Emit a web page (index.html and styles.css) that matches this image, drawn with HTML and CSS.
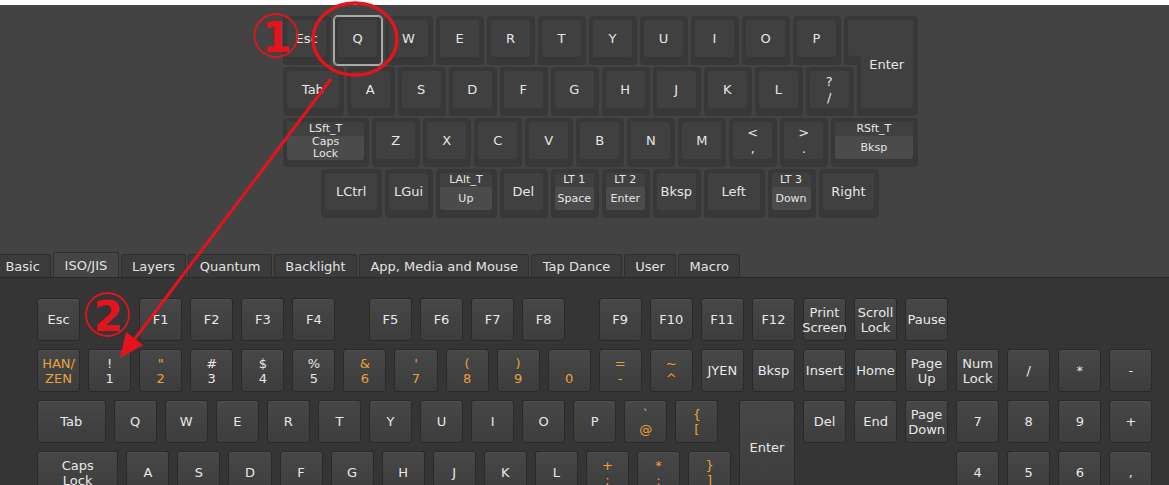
FILE: index.html
```html
<!DOCTYPE html>
<html>
<head>
<meta charset="utf-8">
<link rel="stylesheet" href="styles.css">
</head>
<body>
<div class="strip"></div>
<div class="top">
  <div class="kb">
    <div class="k w1 c1"><div class="cap">Esc</div></div>
    <div class="k w1 hl"><div class="cap">Q</div></div>
    <div class="k w1"><div class="cap">W</div></div>
    <div class="k w1"><div class="cap">E</div></div>
    <div class="k w1"><div class="cap">R</div></div>
    <div class="k w1"><div class="cap">T</div></div>
    <div class="k w1"><div class="cap">Y</div></div>
    <div class="k w1"><div class="cap">U</div></div>
    <div class="k w1"><div class="cap">I</div></div>
    <div class="k w1"><div class="cap">O</div></div>
    <div class="k w1"><div class="cap">P</div></div>
    <div class="k enter"><div class="cap">Enter</div></div>

    <div class="k w125 c1"><div class="cap">Tab</div></div>
    <div class="k w1"><div class="cap">A</div></div>
    <div class="k w1"><div class="cap">S</div></div>
    <div class="k w1"><div class="cap">D</div></div>
    <div class="k w1"><div class="cap">F</div></div>
    <div class="k w1"><div class="cap">G</div></div>
    <div class="k w1"><div class="cap">H</div></div>
    <div class="k w1"><div class="cap">J</div></div>
    <div class="k w1"><div class="cap">K</div></div>
    <div class="k w1"><div class="cap">L</div></div>
    <div class="k w1"><div class="cap two">?<br>/</div></div>

    <div class="k w175 c1 mt"><div class="cap"><span class="lbl">LSft_T</span><span class="box">Caps<br>Lock</span></div></div>
    <div class="k w1"><div class="cap">Z</div></div>
    <div class="k w1"><div class="cap">X</div></div>
    <div class="k w1"><div class="cap">C</div></div>
    <div class="k w1"><div class="cap">V</div></div>
    <div class="k w1"><div class="cap">B</div></div>
    <div class="k w1"><div class="cap">N</div></div>
    <div class="k w1"><div class="cap">M</div></div>
    <div class="k w1"><div class="cap two">&lt;<br>,</div></div>
    <div class="k w1"><div class="cap two">&gt;<br>.</div></div>
    <div class="k w175 mt"><div class="cap"><span class="lbl">RSft_T</span><span class="box">Bksp</span></div></div>

    <div class="k w125 c4"><div class="cap">LCtrl</div></div>
    <div class="k w1"><div class="cap">LGui</div></div>
    <div class="k w125 mt"><div class="cap"><span class="lbl">LAlt_T</span><span class="box">Up</span></div></div>
    <div class="k w1"><div class="cap">Del</div></div>
    <div class="k w1 mt"><div class="cap"><span class="lbl">LT 1</span><span class="box">Space</span></div></div>
    <div class="k w1 mt"><div class="cap"><span class="lbl">LT 2</span><span class="box">Enter</span></div></div>
    <div class="k w1"><div class="cap">Bksp</div></div>
    <div class="k w125"><div class="cap">Left</div></div>
    <div class="k w1 mt"><div class="cap"><span class="lbl">LT 3</span><span class="box">Down</span></div></div>
    <div class="k w125"><div class="cap">Right</div></div>
  </div>
</div>

<div class="tabs">
  <div class="tab first">Basic</div>
  <div class="tab sel">ISO/JIS</div>
  <div class="tab">Layers</div>
  <div class="tab">Quantum</div>
  <div class="tab">Backlight</div>
  <div class="tab">App, Media and Mouse</div>
  <div class="tab">Tap Dance</div>
  <div class="tab">User</div>
  <div class="tab">Macro</div>
</div>

<div class="pane">
  <div class="kb2">
    <div class="b c1">Esc</div>
    <div class="b cF1">F1</div>
    <div class="b">F2</div>
    <div class="b">F3</div>
    <div class="b">F4</div>
    <div class="b cF5">F5</div>
    <div class="b">F6</div>
    <div class="b">F7</div>
    <div class="b">F8</div>
    <div class="b cF9">F9</div>
    <div class="b">F10</div>
    <div class="b">F11</div>
    <div class="b">F12</div>
    <div class="b">Print<br>Screen</div>
    <div class="b">Scroll<br>Lock</div>
    <div class="b">Pause</div>

    <div class="b c1 o">HAN/<br>ZEN</div>
    <div class="b">!<br>1</div>
    <div class="b o">"<br>2</div>
    <div class="b">#<br>3</div>
    <div class="b">$<br>4</div>
    <div class="b">%<br>5</div>
    <div class="b o">&amp;<br>6</div>
    <div class="b o">'<br>7</div>
    <div class="b o">(<br>8</div>
    <div class="b o">)<br>9</div>
    <div class="b o lo">0</div>
    <div class="b o">=<br>-</div>
    <div class="b o">~<br>^</div>
    <div class="b">JYEN</div>
    <div class="b">Bksp</div>
    <div class="b">Insert</div>
    <div class="b">Home</div>
    <div class="b">Page<br>Up</div>
    <div class="b">Num<br>Lock</div>
    <div class="b">/</div>
    <div class="b">*</div>
    <div class="b">-</div>

    <div class="b c1 w15">Tab</div>
    <div class="b">Q</div>
    <div class="b">W</div>
    <div class="b">E</div>
    <div class="b">R</div>
    <div class="b">T</div>
    <div class="b">Y</div>
    <div class="b">U</div>
    <div class="b">I</div>
    <div class="b">O</div>
    <div class="b">P</div>
    <div class="b o">`<br>@</div>
    <div class="b o">{<br>[</div>
    <div class="b ent">Enter</div>
    <div class="b cDel">Del</div>
    <div class="b">End</div>
    <div class="b">Page<br>Down</div>
    <div class="b">7</div>
    <div class="b">8</div>
    <div class="b">9</div>
    <div class="b">+</div>

    <div class="b c1 w175">Caps<br>Lock</div>
    <div class="b">A</div>
    <div class="b">S</div>
    <div class="b">D</div>
    <div class="b">F</div>
    <div class="b">G</div>
    <div class="b">H</div>
    <div class="b">J</div>
    <div class="b">K</div>
    <div class="b">L</div>
    <div class="b o">+<br>;</div>
    <div class="b o">*<br>:</div>
    <div class="b o">}<br>]</div>
    <div class="b cNum">4</div>
    <div class="b">5</div>
    <div class="b">6</div>
    <div class="b">,</div>
  </div>
</div>

<svg class="overlay" width="1169" height="485" viewBox="0 0 1169 485">
  <ellipse cx="355" cy="39" rx="42" ry="36" fill="none" stroke="#e3141c" stroke-width="3.5"/>
  <circle cx="276" cy="35.5" r="21.5" fill="none" stroke="#e3141c" stroke-width="1.8"/>
  <text x="276.5" y="51.5" class="num">1</text>
  <circle cx="107.5" cy="314.5" r="21.5" fill="none" stroke="#e3141c" stroke-width="1.8"/>
  <text x="108" y="330.5" class="num">2</text>
  <line x1="331" y1="79" x2="134" y2="340" stroke="#e3141c" stroke-width="3"/>
  <polygon points="120,358 126,332 143,345" fill="#e3141c"/>
</svg>
</body>
</html>
```

FILE: styles.css
```css
html, body {
  margin: 0;
  padding: 0;
}
body {
  width: 1169px;
  height: 485px;
  overflow: hidden;
  position: relative;
  background: #353535;
  font-family: "DejaVu Sans", "Liberation Sans", sans-serif;
  color: #e6e6e6;
}
.strip {
  height: 5px;
  background: #ffffff;
}
.top {
  height: 247px;
  box-sizing: border-box;
  padding: 11px 0 0 283px;
  background: #434343;
}
.kb {
  display: grid;
  grid-template-columns: repeat(50, 12.75px);
  grid-auto-rows: 51px;
}
.k {
  margin: 0 3px 2px 0;
  background: #383838;
  border-radius: 4px;
  padding: 4px 5px 8px 4px;
  box-sizing: border-box;
  display: flex;
}
.cap {
  flex: 1;
  background: #404040;
  border-radius: 3px;
  display: flex;
  align-items: center;
  justify-content: center;
  text-align: center;
  font-size: 13px;
  line-height: 15px;
  white-space: nowrap;
  position: relative;
}
.cap.two {
  line-height: 16px;
}
.w1 { grid-column-end: span 4; }
.w125 { grid-column-end: span 5; }
.w175 { grid-column-end: span 7; }
.c1 { grid-column-start: 1; }
.c4 { grid-column-start: 4; }
.hl {
  box-shadow: 0 0 0 1px #a8a8a8, inset 0 0 0 1px #a8a8a8;
}
.k.enter {
  grid-column: 46 / span 5;
  grid-row: 1 / span 2;
  position: relative;
}
.k.enter::before {
  content: "";
  position: absolute;
  left: -12.75px;
  top: 0;
  width: 20px;
  height: 49px;
  background: #383838;
  border-radius: 4px 0 0 4px;
}
.k.enter .cap::before {
  content: "";
  position: absolute;
  left: -13px;
  top: 0;
  width: 16px;
  height: 36px;
  background: #404040;
  border-radius: 3px 0 0 3px;
}
.mt .cap {
  flex-direction: column;
  align-items: stretch;
  justify-content: flex-start;
}
.lbl {
  font-size: 11px;
  line-height: 14px;
  height: 14px;
}
.box {
  flex: 1;
  background: #4b4b4b;
  border-radius: 3px;
  font-size: 11px;
  line-height: 12px;
  display: flex;
  align-items: center;
  justify-content: center;
}
.tabs {
  height: 25px;
  background: #434343;
  border-bottom: 1px solid #2a2a2a;
  display: flex;
  align-items: flex-end;
  gap: 2px;
}
.tab {
  height: 23px;
  box-sizing: border-box;
  padding: 0 10.4px;
  border: 1px solid #2f2f2f;
  border-bottom: none;
  border-radius: 3px 3px 0 0;
  background: #3b3b3b;
  font-size: 13px;
  display: flex;
  align-items: center;
  white-space: nowrap;
  color: #e2e2e2;
}
.tab.first {
  margin-left: -6px;
}
.tab.sel {
  height: 25px;
  background: #454545;
}
.pane {
  padding: 20px 0 0 37px;
  background: #353535;
}
.kb2 {
  display: grid;
  grid-template-columns: repeat(88, 12.775px);
  grid-auto-rows: 51px;
}
.b {
  grid-column-end: span 4;
  margin: 0 8px 8px 0;
  box-sizing: border-box;
  border: 1px solid #2a2a2a;
  border-radius: 3px;
  background: linear-gradient(#474747, #3d3d3d);
  box-shadow: inset 0 1px 0 rgba(255, 255, 255, 0.04);
  display: flex;
  align-items: center;
  justify-content: center;
  text-align: center;
  font-size: 13px;
  line-height: 15px;
  white-space: nowrap;
  color: #e8e8e8;
}
.b.o { color: #eba23b; }
.b.lo { padding-top: 16px; }
.b.w15 { grid-column-end: span 6; }
.b.w175 { grid-column-end: span 7; }
.cF1 { grid-column-start: 9; }
.cF5 { grid-column-start: 27; }
.cF9 { grid-column-start: 45; }
.cDel { grid-column-start: 61; }
.cNum { grid-column-start: 73; }
.b.ent {
  grid-column: 56 / span 5;
  grid-row: 3 / span 2;
}
.overlay {
  position: absolute;
  left: 0;
  top: 0;
  pointer-events: none;
}
.num {
  font-family: "DejaVu Sans", sans-serif;
  font-weight: bold;
  font-size: 42px;
  fill: #e3141c;
  text-anchor: middle;
}
```
